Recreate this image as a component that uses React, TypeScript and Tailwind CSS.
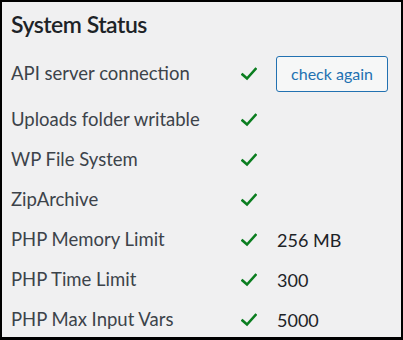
import React from 'react';

type Row = { label: string; value?: string; button?: boolean };

const rows: Row[] = [
  { label: 'API server connection', button: true },
  { label: 'Uploads folder writable' },
  { label: 'WP File System' },
  { label: 'ZipArchive' },
  { label: 'PHP Memory Limit', value: '256 MB' },
  { label: 'PHP Time Limit', value: '300' },
  { label: 'PHP Max Input Vars', value: '5000' },
];

const Check: React.FC = () => (
  <svg width="16" height="14" viewBox="0 0 16 14" aria-hidden="true">
    <path d="M1.5 7.5 L6 11.5 L14.5 2" fill="none" stroke="#0a7d1f" strokeWidth="2.6" strokeLinecap="square" />
  </svg>
);

const App: React.FC = () => {
  return (
    <div
      className="w-[403px] h-[340px] bg-[#f0f0f1] border-2 border-b-[3px] border-black pl-[9px] overflow-hidden"
      style={{ fontFamily: 'Lato, "Open Sans", sans-serif' }}
    >
      <h2 className="text-[23px] font-semibold text-[#1d2327] leading-[36px] pt-[4px] tracking-[-0.5px]">System Status</h2>
      <div className="mt-[14px] flex flex-col">
        {rows.map((r, i) => (
          <div
            key={r.label}
            className={
              'grid grid-cols-[230px_35px_auto] items-center ' + (i === 0 ? 'h-[36px] mb-[8px]' : 'h-[40px]')
            }
          >
            <span className="text-[18.5px] text-[#3c434a]">{r.label}</span>
            <span className="flex items-center"><Check /></span>
            {r.button ? (
              <button className="w-[112px] h-[36px] border border-[#2271b1] rounded-[3px] bg-[#f6f7f7] text-[#2271b1] text-[16px]">
                check again
              </button>
            ) : (
              <span className="text-[18px] text-[#1d2327] pl-[1px]">{r.value}</span>
            )}
          </div>
        ))}
      </div>
    </div>
  );
};

export default App;
